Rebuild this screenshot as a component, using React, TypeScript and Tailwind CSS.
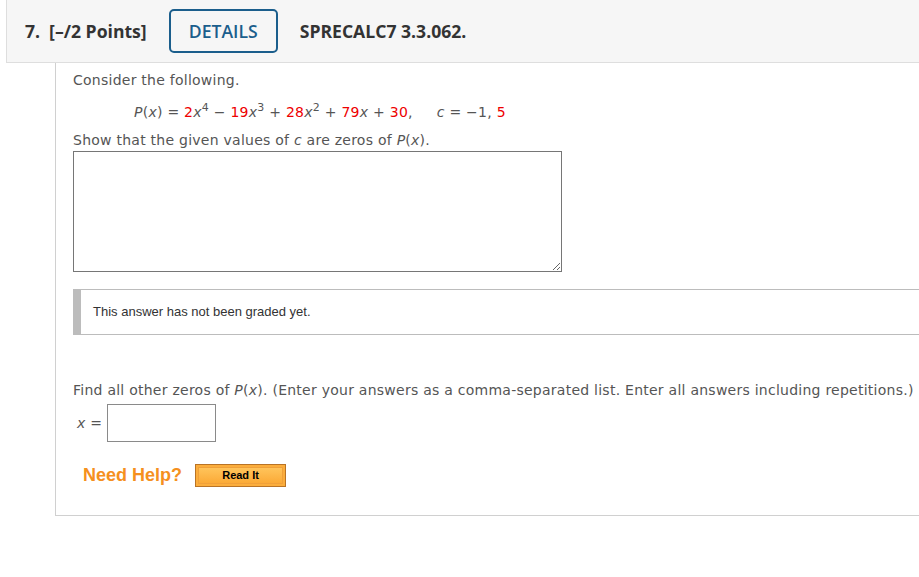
import React from "react";

const red = "text-[#ee0000]";

function Sup({ children }: { children: React.ReactNode }) {
  return <span className="relative -top-[6px] text-[11px] leading-none">{children}</span>;
}

export default function App() {
  return (
    <div className="h-[577px] w-[919px] overflow-hidden bg-white">
      {/* Question header */}
      <div className="ml-[6px] flex h-[63px] items-center border-b border-l border-[#dedede] bg-[#f6f6f6] pl-[18px] font-['Open_Sans',sans-serif] text-[17.6px] font-bold text-[#333]">
        <span>7.</span>
        <span className="ml-[9px]">[–/2 Points]</span>
        <button className="ml-[22px] h-[44px] w-[109px] rounded-[5px] border-2 border-[#1b5e8c] text-[17.6px] font-semibold text-[#1b5e8c]">
          DETAILS
        </button>
        <span className="ml-[22px]">SPRECALC7 3.3.062.</span>
      </div>

      {/* Question body */}
      <div className="ml-[55px] h-[453px] border-b border-l border-[#d0d0d0] pl-[17px] font-['DejaVu_Sans',sans-serif] text-[14px] tracking-[0.25px] text-[#555]">
        <p className="pt-[9px] leading-[16px]">Consider the following.</p>
        <p className="ml-[61px] mt-[16px] leading-[16px]">
          <i>P</i>(<i>x</i>) = <span className={red}>2</span><i>x</i>
          <Sup>4</Sup> − <span className={red}>19</span><i>x</i>
          <Sup>3</Sup> + <span className={red}>28</span><i>x</i>
          <Sup>2</Sup> + <span className={red}>79</span><i>x</i> + <span className={red}>30</span>,
          <span className="ml-[24px]">
            <i>c</i> = −1, <span className={red}>5</span>
          </span>
        </p>
        <p className="mt-[12px] leading-[16px]">
          Show that the given values of <i>c</i> are zeros of <i>P</i>(<i>x</i>).
        </p>
        <textarea className="mt-[3px] block h-[121px] w-[489px] border border-[#767676] bg-white" />

        <div className="mt-[17px] flex h-[46px] items-center border-y border-l-[8px] border-[#bcbcbc] pl-[12px] font-['Liberation_Sans',sans-serif] text-[13px] tracking-normal text-[#333]">
          This answer has not been graded yet.
        </div>

        <p className="mt-[47px] leading-[16px]">
          Find all other zeros of <i>P</i>(<i>x</i>). (Enter your answers as a comma-separated list. Enter all
          answers including repetitions.)
        </p>
        <div className="mt-[6px] flex items-center">
          <span className="ml-[4px]">
            <i>x</i> =
          </span>
          <input className="ml-[5px] h-[38px] w-[109px] border border-[#8a8a8a] bg-white" />
        </div>

        <div className="ml-[10px] mt-[20px] flex items-center font-['Liberation_Sans',sans-serif] tracking-normal">
          <span className="text-[18px] font-bold text-[#f5901e]">Need Help?</span>
          <button className="ml-[13px] h-[23px] w-[91px] border border-[#b97325] bg-[#fbad3c] p-[2px]">
            <span className="flex h-full w-full items-center justify-center border border-[#f0a03a] bg-gradient-to-b from-[#ffc45a] to-[#fbaa36] text-[11px] font-bold text-black">
              Read It
            </span>
          </button>
        </div>
      </div>
    </div>
  );
}
